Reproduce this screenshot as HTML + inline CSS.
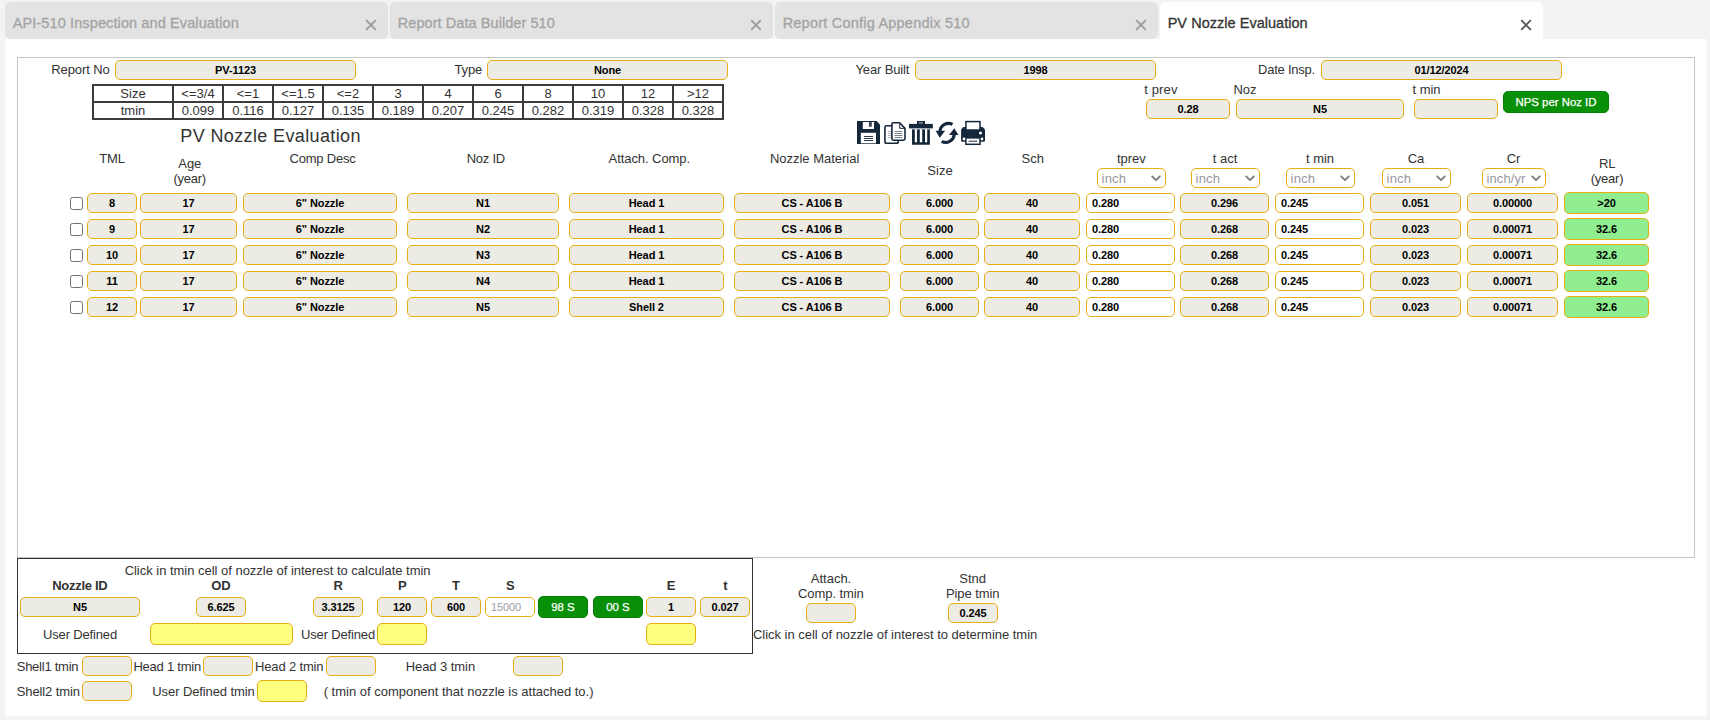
<!DOCTYPE html>
<html lang="en">
<head>
<meta charset="utf-8">
<title>PV Nozzle Evaluation</title>
<style>
html,body{margin:0;padding:0}
body{width:1710px;height:720px;overflow:hidden;background:#f3f3f3;font-family:"Liberation Sans",sans-serif;font-size:13px;color:#333;position:relative}
.panel{position:absolute;left:5px;top:39px;width:1702px;height:677px;background:#fff}
.tab{position:absolute;top:2px;height:37px;width:383px;background:#e3e3e3;border-radius:5px}
.tab.on{background:#fff;border-radius:5px 5px 0 0}
.frame{position:absolute;left:17px;top:57px;width:1678px;height:501px;border:1px solid #c4c4c4;box-sizing:border-box}
.calc{position:absolute;left:17px;top:558px;width:736px;height:96px;border:1px solid #333;box-sizing:border-box}
span{position:absolute;white-space:nowrap;line-height:16px;transform:translateY(-50%)}
span.c{transform:translate(-50%,-50%)}
.l{font-size:13px;color:#333}
.tt{font-size:14.5px;color:#a3a3a3;font-weight:normal;-webkit-text-stroke:0.3px currentColor}
.tt.on{color:#333}
.h1{font-size:18px;color:#333}
.b{font-size:13px;font-weight:bold;color:#333}
.tc{font-size:13px;color:#333}
.i,.w,.y,.g,.gb,.s{position:absolute;box-sizing:border-box;border:1px solid #e7ae14;border-radius:5px;background:#ecebe4;font-weight:bold;font-size:11px;letter-spacing:-0.1px;color:#000;text-align:center;white-space:nowrap;overflow:hidden}
.w{background:#fff;text-align:left;padding-left:5px}
.y{background:#ffff80}
.g{background:#90ee90}
.gb{background:#089108;border-color:#078007;color:#fff;font-weight:normal;font-size:11.4px;letter-spacing:0;-webkit-text-stroke:0.25px #fff}
.s{background:#fff;color:#98989f;font-weight:normal;font-size:13px;letter-spacing:0.25px;text-align:left;padding-left:3.5px;padding-top:1px}
.ph{color:#9c9ca6;font-weight:normal}
.cb{position:absolute;box-sizing:border-box;width:13px;height:13px;border:1px solid #707070;border-radius:2.5px;background:#fff}
table.sz{position:absolute;left:92px;top:84px;border:1px solid #3c3c3c;border-spacing:0;border-collapse:separate;font-size:13px;color:#333}
table.sz td{border:1px solid #3c3c3c;padding:0;height:15px;line-height:15px;width:48px;text-align:center}
table.sz td.f{width:78px}
svg{position:absolute}
</style>
</head>
<body>
<div class="tab" style="left:5px"></div>
<div class="tab" style="left:390px"></div>
<div class="tab" style="left:775px"></div>
<div class="tab on" style="left:1160px"></div>
<div class="panel"></div>
<span class="tt c" style="left:125.8px;top:22.8px;letter-spacing:0.11px;">API-510 Inspection and Evaluation</span>
<svg style="left:365px;top:19px" width="12" height="12" viewBox="0 0 12 12"><path d="M1.2 1.2 L10.8 10.8 M10.8 1.2 L1.2 10.8" stroke="#9c9c9c" stroke-width="1.9" fill="none"/></svg>
<span class="tt c" style="left:476.3px;top:22.8px;letter-spacing:0.07px;">Report Data Builder 510</span>
<svg style="left:750px;top:19px" width="12" height="12" viewBox="0 0 12 12"><path d="M1.2 1.2 L10.8 10.8 M10.8 1.2 L1.2 10.8" stroke="#9c9c9c" stroke-width="1.9" fill="none"/></svg>
<span class="tt c" style="left:876.2px;top:22.8px;letter-spacing:0.22px;">Report Config Appendix 510</span>
<svg style="left:1135px;top:19px" width="12" height="12" viewBox="0 0 12 12"><path d="M1.2 1.2 L10.8 10.8 M10.8 1.2 L1.2 10.8" stroke="#9c9c9c" stroke-width="1.9" fill="none"/></svg>
<span class="tt on c" style="left:1237.7px;top:22.8px;letter-spacing:0.03px;">PV Nozzle Evaluation</span>
<svg style="left:1520px;top:19px" width="12" height="12" viewBox="0 0 12 12"><path d="M1.2 1.2 L10.8 10.8 M10.8 1.2 L1.2 10.8" stroke="#555" stroke-width="1.9" fill="none"/></svg>
<div class="frame"></div>
<span class="l c" style="left:80.5px;top:70.0px;letter-spacing:-0.09px;">Report No</span>
<div class="i" style="left:115px;top:60px;width:241px;height:20px;line-height:18px;">PV-1123</div>
<span class="l c" style="left:468.3px;top:70.0px;letter-spacing:-0.13px;">Type</span>
<div class="i" style="left:487px;top:60px;width:241px;height:20px;line-height:18px;">None</div>
<span class="l c" style="left:882.4px;top:70.0px;letter-spacing:-0.13px;">Year Built</span>
<div class="i" style="left:915px;top:60px;width:241px;height:20px;line-height:18px;">1998</div>
<span class="l c" style="left:1286.5px;top:70.0px;letter-spacing:-0.25px;">Date Insp.</span>
<div class="i" style="left:1321px;top:60px;width:241px;height:20px;line-height:18px;">01/12/2024</div>
<table class="sz"><tr><td class="f">Size</td><td>&lt;=3/4</td><td>&lt;=1</td><td>&lt;=1.5</td><td>&lt;=2</td><td>3</td><td>4</td><td>6</td><td>8</td><td>10</td><td>12</td><td>&gt;12</td></tr><tr><td class="f">tmin</td><td>0.099</td><td>0.116</td><td>0.127</td><td>0.135</td><td>0.189</td><td>0.207</td><td>0.245</td><td>0.282</td><td>0.319</td><td>0.328</td><td>0.328</td></tr></table>
<span class="l c" style="left:1160.9px;top:89.5px;letter-spacing:0.16px;">t prev</span>
<div class="i" style="left:1146px;top:99px;width:84px;height:20px;line-height:18px;">0.28</div>
<span class="l c" style="left:1245.0px;top:89.5px;letter-spacing:-0.06px;">Noz</span>
<div class="i" style="left:1236px;top:99px;width:168px;height:20px;line-height:18px;">N5</div>
<span class="l c" style="left:1426.5px;top:89.5px;">t min</span>
<div class="i" style="left:1414px;top:99px;width:84px;height:20px;line-height:18px;"></div>
<div class="gb" style="left:1503px;top:91px;width:106px;height:22px;line-height:20px;">NPS per Noz ID</div>
<span class="h1 c" style="left:270.6px;top:136.0px;letter-spacing:0.37px;">PV Nozzle Evaluation</span>
<svg style="left:855px;top:119px" width="135" height="28" viewBox="855 119 135 28" fill="#15273a">
<!-- save -->
<path d="M857 121 H876.5 L880 124.5 V144 H857 Z"/>
<rect x="862.8" y="122" width="11.2" height="7" fill="#fff"/>
<rect x="868.9" y="122" width="2.9" height="4.8" fill="#3d4b5a"/>
<rect x="860.8" y="132.8" width="15.2" height="10.5" fill="#fff"/>
<path d="M864 136.5 H873 M864 138.5 H873 M864 140.5 H873" stroke="#15273a" stroke-width="0.9" fill="none"/>
<!-- copy -->
<rect x="884.9" y="125.8" width="13.4" height="17.4" rx="1.8" fill="#fff" stroke="#15273a" stroke-width="1.6"/>
<path d="M888 131.5 H892 M888 133.5 H892 M888 135.5 H892 M888 137.5 H892" stroke="#9aa3ac" stroke-width="0.8" fill="none"/>
<path d="M893.2 122.8 H899.6 L905 128.4 V138.6 Q905 140.2 903.4 140.2 H893.2 Q891.9 140.2 891.9 138.6 V124.2 Q891.9 122.8 893.2 122.8 Z" fill="#fff" stroke="#15273a" stroke-width="1.6" stroke-linejoin="round"/>
<path d="M899.7 123.5 V128.3 H904.6" fill="none" stroke="#15273a" stroke-width="1"/>
<path d="M894.5 131.5 H902.3 M894.5 133.5 H902.3 M894.5 135.5 H902.3 M894.5 137.5 H902.3" stroke="#55626f" stroke-width="0.8" fill="none"/>
<!-- trash -->
<rect x="909" y="123.9" width="23.8" height="4.5"/>
<rect x="917" y="121" width="8" height="3.2"/>
<rect x="919" y="122.2" width="4" height="1.4" fill="#8a949e"/>
<path d="M912 129.2 H914.8 V142.3 H917 V129.2 H919.8 V142.3 H922.2 V129.2 H925 V142.3 H927.2 V129.2 H929.9 V144.8 H912 Z"/>
<rect x="912" y="128.4" width="17.9" height="0.8" fill="#aab1b8"/>
<!-- refresh -->
<path d="M952.5 124.4 A8.6 8.6 0 0 0 939.96 131" fill="none" stroke="#15273a" stroke-width="3.2"/>
<path d="M935.6 130.8 H945.1 L939.8 137.7 Z"/>
<path d="M941.66 141.4 A8.6 8.6 0 0 0 954.2 134.9" fill="none" stroke="#15273a" stroke-width="3.2"/>
<path d="M949 135 H958.4 L954.3 128.2 Z"/>
<!-- printer -->
<path d="M963.4 127 H982.6 L985 129.4 V140.6 Q985 141.8 983.8 141.8 H962.3 Q961.1 141.8 961.1 140.6 V129.4 Z"/>
<rect x="965.9" y="121.6" width="14.1" height="8.4" fill="#fff" stroke="#15273a" stroke-width="1.5"/>
<rect x="965.9" y="137.9" width="14.1" height="6.4" fill="#fff" stroke="#15273a" stroke-width="1.5"/>
<path d="M968.7 141.2 H977.2" stroke="#15273a" stroke-width="1" fill="none"/>
<circle cx="980.5" cy="133.1" r="1.5" fill="#fff"/>
<circle cx="964" cy="139" r="1.4" fill="#fff"/>
<circle cx="982" cy="139" r="1.4" fill="#fff"/>
</svg>
<span class="l c" style="left:112.0px;top:159.0px;letter-spacing:-0.15px;">TML</span>
<span class="l c" style="left:189.8px;top:164.0px;letter-spacing:-0.02px;">Age</span>
<span class="l c" style="left:189.7px;top:179.0px;letter-spacing:-0.25px;">(year)</span>
<span class="l c" style="left:322.5px;top:159.0px;letter-spacing:-0.23px;">Comp Desc</span>
<span class="l c" style="left:485.8px;top:159.0px;letter-spacing:-0.27px;">Noz ID</span>
<span class="l c" style="left:649.3px;top:159.0px;letter-spacing:-0.07px;">Attach. Comp.</span>
<span class="l c" style="left:814.6px;top:159.0px;letter-spacing:-0.01px;">Nozzle Material</span>
<span class="l c" style="left:940.0px;top:171.0px;">Size</span>
<span class="l c" style="left:1032.8px;top:159.0px;">Sch</span>
<span class="l c" style="left:1131.4px;top:159.0px;">tprev</span>
<span class="l c" style="left:1225.0px;top:159.0px;">t act</span>
<span class="l c" style="left:1320.0px;top:159.0px;">t min</span>
<span class="l c" style="left:1416.0px;top:159.0px;">Ca</span>
<span class="l c" style="left:1513.5px;top:159.0px;">Cr</span>
<span class="l c" style="left:1607.1px;top:164.0px;letter-spacing:-0.15px;">RL</span>
<span class="l c" style="left:1607.0px;top:179.0px;letter-spacing:-0.25px;">(year)</span>
<div class="s" style="left:1097px;top:168px;width:69px;height:20px;line-height:18px;">inch</div>
<svg style="left:1150px;top:174px" width="12" height="9" viewBox="0 0 12 9"><path d="M2.2 2.4 L6 6.1 L9.8 2.4" stroke="#7d7d7d" stroke-width="1.9" fill="none" stroke-linecap="round" stroke-linejoin="round"/></svg>
<div class="s" style="left:1191px;top:168px;width:69px;height:20px;line-height:18px;">inch</div>
<svg style="left:1244px;top:174px" width="12" height="9" viewBox="0 0 12 9"><path d="M2.2 2.4 L6 6.1 L9.8 2.4" stroke="#7d7d7d" stroke-width="1.9" fill="none" stroke-linecap="round" stroke-linejoin="round"/></svg>
<div class="s" style="left:1286px;top:168px;width:69px;height:20px;line-height:18px;">inch</div>
<svg style="left:1339px;top:174px" width="12" height="9" viewBox="0 0 12 9"><path d="M2.2 2.4 L6 6.1 L9.8 2.4" stroke="#7d7d7d" stroke-width="1.9" fill="none" stroke-linecap="round" stroke-linejoin="round"/></svg>
<div class="s" style="left:1382px;top:168px;width:69px;height:20px;line-height:18px;">inch</div>
<svg style="left:1435px;top:174px" width="12" height="9" viewBox="0 0 12 9"><path d="M2.2 2.4 L6 6.1 L9.8 2.4" stroke="#7d7d7d" stroke-width="1.9" fill="none" stroke-linecap="round" stroke-linejoin="round"/></svg>
<div class="s" style="left:1482px;top:168px;width:64px;height:20px;line-height:18px;"><i style="font-style:normal;letter-spacing:0.1px">inch/yr</i></div>
<svg style="left:1530px;top:174px" width="12" height="9" viewBox="0 0 12 9"><path d="M2.2 2.4 L6 6.1 L9.8 2.4" stroke="#7d7d7d" stroke-width="1.9" fill="none" stroke-linecap="round" stroke-linejoin="round"/></svg>
<div class="cb" style="left:70px;top:197px"></div>
<div class="i" style="left:87px;top:193px;width:50px;height:20px;line-height:18px;">8</div>
<div class="i" style="left:140px;top:193px;width:97px;height:20px;line-height:18px;">17</div>
<div class="i" style="left:243px;top:193px;width:154px;height:20px;line-height:18px;">6" Nozzle</div>
<div class="i" style="left:407px;top:193px;width:152px;height:20px;line-height:18px;">N1</div>
<div class="i" style="left:569px;top:193px;width:155px;height:20px;line-height:18px;">Head 1</div>
<div class="i" style="left:734px;top:193px;width:156px;height:20px;line-height:18px;">CS - A106 B</div>
<div class="i" style="left:900px;top:193px;width:79px;height:20px;line-height:18px;">6.000</div>
<div class="i" style="left:984px;top:193px;width:96px;height:20px;line-height:18px;">40</div>
<div class="w" style="left:1086px;top:193px;width:89px;height:20px;line-height:18px;">0.280</div>
<div class="i" style="left:1180px;top:193px;width:89px;height:20px;line-height:18px;">0.296</div>
<div class="w" style="left:1275px;top:193px;width:89px;height:20px;line-height:18px;">0.245</div>
<div class="i" style="left:1370px;top:193px;width:91px;height:20px;line-height:18px;">0.051</div>
<div class="i" style="left:1467px;top:193px;width:91px;height:20px;line-height:18px;">0.00000</div>
<div class="g" style="left:1564px;top:192px;width:85px;height:22px;line-height:20px;">&gt;20</div>
<div class="cb" style="left:70px;top:223px"></div>
<div class="i" style="left:87px;top:219px;width:50px;height:20px;line-height:18px;">9</div>
<div class="i" style="left:140px;top:219px;width:97px;height:20px;line-height:18px;">17</div>
<div class="i" style="left:243px;top:219px;width:154px;height:20px;line-height:18px;">6" Nozzle</div>
<div class="i" style="left:407px;top:219px;width:152px;height:20px;line-height:18px;">N2</div>
<div class="i" style="left:569px;top:219px;width:155px;height:20px;line-height:18px;">Head 1</div>
<div class="i" style="left:734px;top:219px;width:156px;height:20px;line-height:18px;">CS - A106 B</div>
<div class="i" style="left:900px;top:219px;width:79px;height:20px;line-height:18px;">6.000</div>
<div class="i" style="left:984px;top:219px;width:96px;height:20px;line-height:18px;">40</div>
<div class="w" style="left:1086px;top:219px;width:89px;height:20px;line-height:18px;">0.280</div>
<div class="i" style="left:1180px;top:219px;width:89px;height:20px;line-height:18px;">0.268</div>
<div class="w" style="left:1275px;top:219px;width:89px;height:20px;line-height:18px;">0.245</div>
<div class="i" style="left:1370px;top:219px;width:91px;height:20px;line-height:18px;">0.023</div>
<div class="i" style="left:1467px;top:219px;width:91px;height:20px;line-height:18px;">0.00071</div>
<div class="g" style="left:1564px;top:218px;width:85px;height:22px;line-height:20px;">32.6</div>
<div class="cb" style="left:70px;top:249px"></div>
<div class="i" style="left:87px;top:245px;width:50px;height:20px;line-height:18px;">10</div>
<div class="i" style="left:140px;top:245px;width:97px;height:20px;line-height:18px;">17</div>
<div class="i" style="left:243px;top:245px;width:154px;height:20px;line-height:18px;">6" Nozzle</div>
<div class="i" style="left:407px;top:245px;width:152px;height:20px;line-height:18px;">N3</div>
<div class="i" style="left:569px;top:245px;width:155px;height:20px;line-height:18px;">Head 1</div>
<div class="i" style="left:734px;top:245px;width:156px;height:20px;line-height:18px;">CS - A106 B</div>
<div class="i" style="left:900px;top:245px;width:79px;height:20px;line-height:18px;">6.000</div>
<div class="i" style="left:984px;top:245px;width:96px;height:20px;line-height:18px;">40</div>
<div class="w" style="left:1086px;top:245px;width:89px;height:20px;line-height:18px;">0.280</div>
<div class="i" style="left:1180px;top:245px;width:89px;height:20px;line-height:18px;">0.268</div>
<div class="w" style="left:1275px;top:245px;width:89px;height:20px;line-height:18px;">0.245</div>
<div class="i" style="left:1370px;top:245px;width:91px;height:20px;line-height:18px;">0.023</div>
<div class="i" style="left:1467px;top:245px;width:91px;height:20px;line-height:18px;">0.00071</div>
<div class="g" style="left:1564px;top:244px;width:85px;height:22px;line-height:20px;">32.6</div>
<div class="cb" style="left:70px;top:275px"></div>
<div class="i" style="left:87px;top:271px;width:50px;height:20px;line-height:18px;">11</div>
<div class="i" style="left:140px;top:271px;width:97px;height:20px;line-height:18px;">17</div>
<div class="i" style="left:243px;top:271px;width:154px;height:20px;line-height:18px;">6" Nozzle</div>
<div class="i" style="left:407px;top:271px;width:152px;height:20px;line-height:18px;">N4</div>
<div class="i" style="left:569px;top:271px;width:155px;height:20px;line-height:18px;">Head 1</div>
<div class="i" style="left:734px;top:271px;width:156px;height:20px;line-height:18px;">CS - A106 B</div>
<div class="i" style="left:900px;top:271px;width:79px;height:20px;line-height:18px;">6.000</div>
<div class="i" style="left:984px;top:271px;width:96px;height:20px;line-height:18px;">40</div>
<div class="w" style="left:1086px;top:271px;width:89px;height:20px;line-height:18px;">0.280</div>
<div class="i" style="left:1180px;top:271px;width:89px;height:20px;line-height:18px;">0.268</div>
<div class="w" style="left:1275px;top:271px;width:89px;height:20px;line-height:18px;">0.245</div>
<div class="i" style="left:1370px;top:271px;width:91px;height:20px;line-height:18px;">0.023</div>
<div class="i" style="left:1467px;top:271px;width:91px;height:20px;line-height:18px;">0.00071</div>
<div class="g" style="left:1564px;top:270px;width:85px;height:22px;line-height:20px;">32.6</div>
<div class="cb" style="left:70px;top:301px"></div>
<div class="i" style="left:87px;top:297px;width:50px;height:20px;line-height:18px;">12</div>
<div class="i" style="left:140px;top:297px;width:97px;height:20px;line-height:18px;">17</div>
<div class="i" style="left:243px;top:297px;width:154px;height:20px;line-height:18px;">6" Nozzle</div>
<div class="i" style="left:407px;top:297px;width:152px;height:20px;line-height:18px;">N5</div>
<div class="i" style="left:569px;top:297px;width:155px;height:20px;line-height:18px;">Shell 2</div>
<div class="i" style="left:734px;top:297px;width:156px;height:20px;line-height:18px;">CS - A106 B</div>
<div class="i" style="left:900px;top:297px;width:79px;height:20px;line-height:18px;">6.000</div>
<div class="i" style="left:984px;top:297px;width:96px;height:20px;line-height:18px;">40</div>
<div class="w" style="left:1086px;top:297px;width:89px;height:20px;line-height:18px;">0.280</div>
<div class="i" style="left:1180px;top:297px;width:89px;height:20px;line-height:18px;">0.268</div>
<div class="w" style="left:1275px;top:297px;width:89px;height:20px;line-height:18px;">0.245</div>
<div class="i" style="left:1370px;top:297px;width:91px;height:20px;line-height:18px;">0.023</div>
<div class="i" style="left:1467px;top:297px;width:91px;height:20px;line-height:18px;">0.00071</div>
<div class="g" style="left:1564px;top:296px;width:85px;height:22px;line-height:20px;">32.6</div>
<div class="calc"></div>
<span class="l c" style="left:277.6px;top:571.0px;letter-spacing:-0.02px;">Click in tmin cell of nozzle of interest to calculate tmin</span>
<span class="b c" style="left:79.8px;top:586.0px;letter-spacing:-0.30px;">Nozzle ID</span>
<span class="b c" style="left:221.0px;top:586.0px;">OD</span>
<span class="b c" style="left:338.3px;top:586.0px;">R</span>
<span class="b c" style="left:402.3px;top:586.0px;">P</span>
<span class="b c" style="left:456.0px;top:586.0px;">T</span>
<span class="b c" style="left:510.4px;top:586.0px;">S</span>
<span class="b c" style="left:671.0px;top:586.0px;">E</span>
<span class="b c" style="left:725.4px;top:586.0px;">t</span>
<div class="i" style="left:20px;top:597px;width:120px;height:20px;line-height:18px;">N5</div>
<div class="i" style="left:196px;top:597px;width:50px;height:20px;line-height:18px;">6.625</div>
<div class="i" style="left:313px;top:597px;width:50px;height:20px;line-height:18px;">3.3125</div>
<div class="i" style="left:377px;top:597px;width:50px;height:20px;line-height:18px;">120</div>
<div class="i" style="left:431px;top:597px;width:50px;height:20px;line-height:18px;">600</div>
<div class="w" style="left:485px;top:597px;width:50px;height:20px;line-height:18px;"><b class="ph">15000</b></div>
<div class="gb" style="left:538px;top:596px;width:50px;height:22px;line-height:20px;">98 S</div>
<div class="gb" style="left:593px;top:596px;width:50px;height:22px;line-height:20px;">00 S</div>
<div class="i" style="left:646px;top:597px;width:50px;height:20px;line-height:18px;">1</div>
<div class="i" style="left:700px;top:597px;width:50px;height:20px;line-height:18px;">0.027</div>
<span class="l c" style="left:80.0px;top:635.0px;letter-spacing:-0.15px;">User Defined</span>
<div class="y" style="left:150px;top:623px;width:143px;height:22px;line-height:20px;"></div>
<span class="l c" style="left:338.0px;top:635.0px;letter-spacing:-0.15px;">User Defined</span>
<div class="y" style="left:377px;top:623px;width:50px;height:22px;line-height:20px;"></div>
<div class="y" style="left:646px;top:623px;width:50px;height:22px;line-height:20px;"></div>
<span class="l c" style="left:831.0px;top:579.0px;">Attach.</span>
<span class="l c" style="left:830.9px;top:593.6px;letter-spacing:-0.07px;">Comp. tmin</span>
<div class="i" style="left:806px;top:603px;width:50px;height:20px;line-height:18px;"></div>
<span class="l c" style="left:972.7px;top:579.0px;">Stnd</span>
<span class="l c" style="left:972.7px;top:593.6px;letter-spacing:-0.07px;">Pipe tmin</span>
<div class="i" style="left:948px;top:603px;width:50px;height:20px;line-height:18px;">0.245</div>
<span class="l c" style="left:895.1px;top:635.0px;letter-spacing:-0.02px;">Click in cell of nozzle of interest to determine tmin</span>
<span class="l c" style="left:47.5px;top:666.6px;letter-spacing:-0.25px;">Shell1 tmin</span>
<div class="i" style="left:82px;top:656px;width:50px;height:20px;line-height:18px;"></div>
<span class="l c" style="left:167.2px;top:666.6px;letter-spacing:-0.24px;">Head 1 tmin</span>
<div class="i" style="left:203px;top:656px;width:50px;height:20px;line-height:18px;"></div>
<span class="l c" style="left:289.2px;top:666.6px;letter-spacing:-0.16px;">Head 2 tmin</span>
<div class="i" style="left:326px;top:656px;width:50px;height:20px;line-height:18px;"></div>
<span class="l c" style="left:440.4px;top:666.6px;letter-spacing:-0.06px;">Head 3 tmin</span>
<div class="i" style="left:513px;top:656px;width:50px;height:20px;line-height:18px;"></div>
<span class="l c" style="left:48.3px;top:692.0px;letter-spacing:-0.10px;">Shell2 tmin</span>
<div class="i" style="left:82px;top:681px;width:50px;height:20px;line-height:18px;"></div>
<span class="l c" style="left:203.5px;top:692.0px;letter-spacing:-0.10px;">User Defined tmin</span>
<div class="y" style="left:257px;top:680px;width:50px;height:22px;line-height:20px;"></div>
<span class="l c" style="left:458.6px;top:692.0px;letter-spacing:-0.01px;">( tmin of component that nozzle is attached to.)</span>
</body>
</html>
